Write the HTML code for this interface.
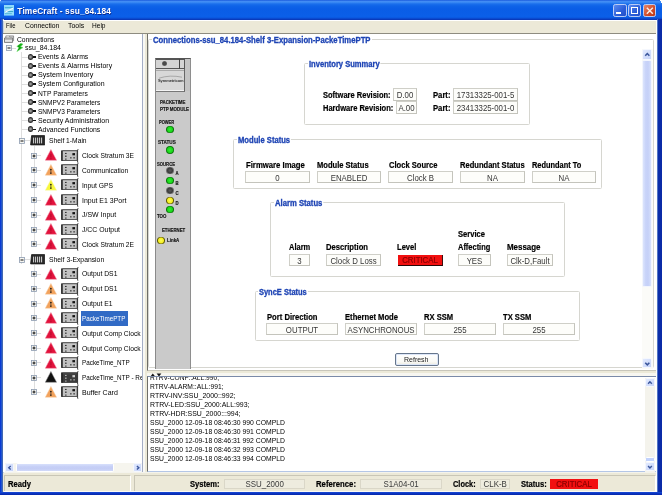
<!DOCTYPE html><html><head><meta charset="utf-8"><title>TimeCraft</title><style>
*{margin:0;padding:0;box-sizing:border-box}
html,body{width:662px;height:495px;overflow:hidden;background:#0A3FD8}
body{position:relative;font-family:"Liberation Sans",sans-serif;color:#000}
.a{position:absolute}
.t{position:absolute;white-space:nowrap;font-size:7.15px;line-height:9px;transform:scale(.95,1.09);transform-origin:0 6px;color:#000}
.b{position:absolute;white-space:nowrap;font-size:7.65px;line-height:10px;font-weight:bold;color:#000;-webkit-text-stroke:.18px #000;transform:scale(1,1.08);transform-origin:0 7px}
.g{position:absolute;border:1px solid #D6D6D0;border-radius:1.5px}
.gt{position:absolute;white-space:nowrap;font-size:7.65px;line-height:10px;font-weight:bold;color:#1E44B4;-webkit-text-stroke:.28px #1E44B4;background:#fff;padding:0 1px;transform:scale(1,1.08);transform-origin:0 7px}
.f{position:absolute;border:1px solid #C4C4BC;border-top-color:#CFCFC8;border-left-color:#CFCFC8;background:#FDFDFA;overflow:hidden}
.ft{position:absolute;left:0;right:0;text-align:center;font-size:7.7px;line-height:10px;white-space:nowrap;color:#363636;transform:scale(1.02,1.1);transform-origin:50% 7px}
.sf{position:absolute;border:1px solid #DAD7C8;background:#EEECDF}
</style></head><body><div id="w" style="position:absolute;left:0;top:0;width:662px;height:495px;will-change:transform">
<div class="a" style="left:0;top:0;width:662px;height:19.7px;background:linear-gradient(180deg,#1C5CDC 0,#2E74EA 4%,#4A96F8 9%,#3484F2 13%,#1A6EEC 20%,#0E63E8 30%,#0A5DE6 45%,#0B5FE8 84%,#0A55DC 90%,#0A40C4 95%,#0A34B2 100%)"></div>
<div class="a" style="left:3.2px;top:19.7px;width:653.8px;height:.9px;background:#fff;z-index:1"></div>
<div class="a" style="left:0;top:0;width:3px;height:2px;background:radial-gradient(circle at 100% 100%,transparent 2.5px,#fff 3px)"></div>
<div class="a" style="left:658px;top:0;width:4px;height:3px;background:radial-gradient(circle at 0 100%,transparent 3px,#fff 3.5px)"></div>
<div class="a" style="left:0;top:19px;width:4px;height:476px;background:linear-gradient(90deg,#0A3AD4 0,#0A3AD4 1px,#2256CE 1px,#2256CE 2px,#4268B2 2px,#4268B2 3px,#C4D2E4 3px,#C4D2E4 4px)"></div>
<div class="a" style="left:657px;top:19px;width:5px;height:476px;background:linear-gradient(90deg,#5274C4 0,#5274C4 1px,#0C2EAA 1px,#0A2AA6 100%)"></div>
<div class="a" style="left:0;top:491.5px;width:662px;height:3.5px;background:linear-gradient(180deg,#1A4CD8,#0A34C0 50%,#0626A8);z-index:3"></div>
<div class="a" style="left:4px;top:19.7px;width:653px;height:472.3px;background:#ECE9D8"></div>
<svg class="a" style="left:3.9px;top:5.2px" width="10" height="10.6" viewBox="0 0 10 10.6"><rect width="10" height="10.6" fill="#8FDBFB"/><rect x="0.8" y="2.2" width="8" height="1" fill="#3EA8CC"/><rect x="0.8" y="6" width="8.4" height="1" fill="#3EA8CC"/><rect x="0.8" y="8.2" width="7" height="0.9" fill="#55B8D8"/><path d="M1 7.2 L9 3.2" stroke="#fff" stroke-width="1.2"/><path d="M1 5 L9 5" stroke="#C8EEFC" stroke-width=".8"/></svg>
<div class="a" style="left:17.3px;top:5.6px;font-size:8.4px;line-height:11px;font-weight:bold;color:#fff;white-space:nowrap;letter-spacing:.12px;text-shadow:.6px .6px 0 #0A2A90">TimeCraft - ssu_84.184</div>
<div class="a" style="left:613px;top:3.9px;width:13.5px;height:13.6px;border:1px solid #BACCF6;border-radius:2.2px;background:linear-gradient(135deg,#5C8CF0,#2A5CD8 60%,#2450C8)"><div class="a" style="left:2.3px;top:7.6px;width:4.4px;height:1.6px;background:#fff"></div></div>
<div class="a" style="left:627.9px;top:3.9px;width:13.5px;height:13.6px;border:1px solid #BACCF6;border-radius:2.2px;background:linear-gradient(135deg,#5C8CF0,#2A5CD8 60%,#2450C8)"><div class="a" style="left:2.4px;top:2.2px;width:6.8px;height:6.8px;border:1px solid #fff;border-top-width:1.9px"></div></div>
<div class="a" style="left:642.8px;top:3.9px;width:13.5px;height:13.6px;border:1px solid #BACCF6;border-radius:2.2px;background:linear-gradient(135deg,#E88868,#D04A28 60%,#B83818)"><svg class="a" style="left:0;top:0" width="11" height="11" viewBox="0 0 11 11"><path d="M2.8 2.8 L8.8 8.8 M8.8 2.8 L2.8 8.8" stroke="#FBEDE6" stroke-width="1.45"/></svg></div>
<div class="t" style="left:6.0px;top:22px;transform:scale(0.825,1.09)">File</div>
<div class="t" style="left:25.0px;top:22px;transform:scale(0.9518,1.09)">Connection</div>
<div class="t" style="left:68.4px;top:22px;transform:scale(0.9717,1.09)">Tools</div>
<div class="t" style="left:91.8px;top:22px;transform:scale(0.9191,1.09)">Help</div>
<div class="a" style="left:3.2px;top:32.8px;width:653.8px;height:1px;background:#8E8C80"></div>
<div class="a" style="left:3.3px;top:33.5px;width:139.7px;height:438.5px;background:#fff;border-right:1px solid #A4AEC6"></div>
<div class="a" style="left:143px;top:33.5px;width:1.6px;height:438.5px;background:#F8F8F4"></div>
<div class="a" style="left:0;top:0;width:142.4px;height:463px;overflow:hidden">
<div class="a" style="left:21.1px;top:52px;width:.7px;height:212px;background:#DEDEDE"></div>
<div class="a" style="left:33.6px;top:146px;width:.7px;height:99px;background:#DEDEDE"></div>
<div class="a" style="left:33.6px;top:265px;width:.7px;height:128px;background:#DEDEDE"></div>
<svg class="a" style="left:4.2px;top:35px" width="10.4" height="8" viewBox="0 0 10.4 8"><path d="M1.8 3 L1.8 .9 L9.6 .9 L9.6 5.6 L8.6 5.6" fill="#F2F2F2" stroke="#5A5A5A" stroke-width=".6"/><path d="M5.6 .9 L5.6 2 L9.6 2" fill="none" stroke="#666" stroke-width=".5"/><path d="M.5 7.4 L.5 3.1 L8.6 3.1 L8.6 7.4 Z" fill="#E8E8E8" stroke="#4A4A4A" stroke-width=".7"/><path d="M.8 4.5 L8.4 4.5" stroke="#8A8A8A" stroke-width=".5"/></svg>
<div class="t" style="left:16.6px;top:36px;transform:scale(0.9445,1.09);">Connections</div>
<svg class="a" style="left:6.00px;top:44.70px" width="6" height="6" viewBox="0 0 6 6"><rect x=".45" y=".55" width="5.1" height="4.9" fill="#F6F6F2" stroke="#8C9BB0" stroke-width=".8"/><path d="M1.5 3 L4.5 3" stroke="#000" stroke-width=".95"/></svg>
<div class="a" style="left:11.8px;top:47.5px;width:4px;height:.7px;background:#DEDEDE"></div>
<svg class="a" style="left:15.6px;top:43.4px" width="7.8" height="9" viewBox="0 0 7.8 9"><path d="M5 .3 L.8 3.4 L3 4.5 L.9 8.6 L7 4.6 L4.6 3.7 L7 1.2 Z" fill="#18B418" stroke="#6EDC6E" stroke-width=".6" stroke-linejoin="round"/><path d="M4.6 1.2 L2 3.4 L4.2 4.3 L2.2 7.2" fill="none" stroke="#0E9A0E" stroke-width=".9"/></svg>
<div class="t" style="left:25.4px;top:44px;transform:scale(0.9746,1.09);">ssu_84.184</div>
<div class="a" style="left:21.5px;top:56.60px;width:6.5px;height:.7px;background:#DEDEDE"></div>
<div class="a" style="left:27.9px;top:54.15px;width:5.5px;height:5.5px;border-radius:50%;background:radial-gradient(circle,#A8A8A8 0,#888 25%,#2A2A2A 60%,#333 100%)"></div>
<div class="a" style="left:33.2px;top:56.30px;width:2.6px;height:1.3px;background:#111"></div>
<div class="t" style="left:38.0px;top:53px;transform:scale(0.9601,1.09);">Events &amp; Alarms</div>
<div class="a" style="left:21.5px;top:65.63px;width:6.5px;height:.7px;background:#DEDEDE"></div>
<div class="a" style="left:27.9px;top:63.18px;width:5.5px;height:5.5px;border-radius:50%;background:radial-gradient(circle,#A8A8A8 0,#888 25%,#2A2A2A 60%,#333 100%)"></div>
<div class="a" style="left:33.2px;top:65.33px;width:2.6px;height:1.3px;background:#111"></div>
<div class="t" style="left:38.0px;top:62px;transform:scale(0.9674,1.09);">Events &amp; Alarms History</div>
<div class="a" style="left:21.5px;top:74.66px;width:6.5px;height:.7px;background:#DEDEDE"></div>
<div class="a" style="left:27.9px;top:72.21px;width:5.5px;height:5.5px;border-radius:50%;background:radial-gradient(circle,#A8A8A8 0,#888 25%,#2A2A2A 60%,#333 100%)"></div>
<div class="a" style="left:33.2px;top:74.36px;width:2.6px;height:1.3px;background:#111"></div>
<div class="t" style="left:38.0px;top:71px;transform:scale(1.0023,1.09);">System Inventory</div>
<div class="a" style="left:21.5px;top:83.69px;width:6.5px;height:.7px;background:#DEDEDE"></div>
<div class="a" style="left:27.9px;top:81.24px;width:5.5px;height:5.5px;border-radius:50%;background:radial-gradient(circle,#A8A8A8 0,#888 25%,#2A2A2A 60%,#333 100%)"></div>
<div class="a" style="left:33.2px;top:83.39px;width:2.6px;height:1.3px;background:#111"></div>
<div class="t" style="left:38.0px;top:80px;transform:scale(0.9756,1.09);">System Configuration</div>
<div class="a" style="left:21.5px;top:92.72px;width:6.5px;height:.7px;background:#DEDEDE"></div>
<div class="a" style="left:27.9px;top:90.27px;width:5.5px;height:5.5px;border-radius:50%;background:radial-gradient(circle,#A8A8A8 0,#888 25%,#2A2A2A 60%,#333 100%)"></div>
<div class="a" style="left:33.2px;top:92.42px;width:2.6px;height:1.3px;background:#111"></div>
<div class="t" style="left:38.0px;top:90px;transform:scale(0.9388,1.09);">NTP Parameters</div>
<div class="a" style="left:21.5px;top:101.75px;width:6.5px;height:.7px;background:#DEDEDE"></div>
<div class="a" style="left:27.9px;top:99.30px;width:5.5px;height:5.5px;border-radius:50%;background:radial-gradient(circle,#A8A8A8 0,#888 25%,#2A2A2A 60%,#333 100%)"></div>
<div class="a" style="left:33.2px;top:101.45px;width:2.6px;height:1.3px;background:#111"></div>
<div class="t" style="left:38.0px;top:99px;transform:scale(0.9126,1.09);">SNMPV2 Parameters</div>
<div class="a" style="left:21.5px;top:110.78px;width:6.5px;height:.7px;background:#DEDEDE"></div>
<div class="a" style="left:27.9px;top:108.33px;width:5.5px;height:5.5px;border-radius:50%;background:radial-gradient(circle,#A8A8A8 0,#888 25%,#2A2A2A 60%,#333 100%)"></div>
<div class="a" style="left:33.2px;top:110.48px;width:2.6px;height:1.3px;background:#111"></div>
<div class="t" style="left:38.0px;top:108px;transform:scale(0.9126,1.09);">SNMPV3 Parameters</div>
<div class="a" style="left:21.5px;top:119.81px;width:6.5px;height:.7px;background:#DEDEDE"></div>
<div class="a" style="left:27.9px;top:117.36px;width:5.5px;height:5.5px;border-radius:50%;background:radial-gradient(circle,#A8A8A8 0,#888 25%,#2A2A2A 60%,#333 100%)"></div>
<div class="a" style="left:33.2px;top:119.51px;width:2.6px;height:1.3px;background:#111"></div>
<div class="t" style="left:38.0px;top:117px;transform:scale(0.9788,1.09);">Security Administration</div>
<div class="a" style="left:21.5px;top:128.84px;width:6.5px;height:.7px;background:#DEDEDE"></div>
<div class="a" style="left:27.9px;top:126.39px;width:5.5px;height:5.5px;border-radius:50%;background:radial-gradient(circle,#A8A8A8 0,#888 25%,#2A2A2A 60%,#333 100%)"></div>
<div class="a" style="left:33.2px;top:128.54px;width:2.6px;height:1.3px;background:#111"></div>
<div class="t" style="left:38.0px;top:126px;transform:scale(0.9629,1.09);">Advanced Functions</div>
<svg class="a" style="left:18.60px;top:137.60px" width="6" height="6" viewBox="0 0 6 6"><rect x=".45" y=".55" width="5.1" height="4.9" fill="#F6F6F2" stroke="#8C9BB0" stroke-width=".8"/><path d="M1.5 3 L4.5 3" stroke="#000" stroke-width=".95"/></svg>
<div class="a" style="left:24.5px;top:140.30px;width:5px;height:.7px;background:#DEDEDE"></div>
<svg class="a" style="left:29.8px;top:135.20px" width="15.4" height="10.6" viewBox="0 0 15.4 10.6"><path d="M1.6 .6 L14.6 .6 L14.8 9.9 L.6 9.9 Z" fill="#2A2A2A" stroke="#1A1A1A" stroke-width=".8" stroke-linejoin="round"/><g fill="#C8C8C8"><rect x="3" y="2.6" width="1.1" height="5.8"/><rect x="5" y="2.6" width="1.1" height="5.8"/><rect x="7" y="2.6" width="1.1" height="5.8"/><rect x="9" y="2.6" width="1.1" height="5.8"/><rect x="11" y="2.6" width="1.1" height="5.8"/></g></svg>
<div class="t" style="left:49.3px;top:137px;transform:scale(0.9378,1.09);">Shelf 1-Main</div>
<svg class="a" style="left:30.90px;top:152.60px" width="6" height="6" viewBox="0 0 6 6"><rect x=".45" y=".55" width="5.1" height="4.9" fill="#F6F6F2" stroke="#8C9BB0" stroke-width=".8"/><path d="M1.5 3 L4.5 3" stroke="#000" stroke-width=".95"/><path d="M3 1.5 L3 4.5" stroke="#000" stroke-width=".9"/></svg>
<div class="a" style="left:36.8px;top:155.30px;width:4px;height:.7px;background:#DEDEDE"></div>
<svg class="a" style="left:44.7px;top:149.40px" width="12" height="12" viewBox="0 0 12 12"><path d="M5.9 .5 L11.6 11.3 L.3 11.3 Z" fill="#E2123C" stroke="#F28AA0" stroke-width=".5"/><path d="M5.9 4.8 L5.9 8.4" stroke="#A80A26" stroke-width="1.1" opacity=".75"/><circle cx="5.9" cy="9.7" r=".7" fill="#A80A26" opacity=".7"/></svg>
<svg class="a" style="left:61px;top:148.60px" width="18" height="14" viewBox="0 0 18 14"><rect x=".7" y="1.9" width="15.4" height="9.6" fill="#C2C2C2" stroke="#3A3A3A" stroke-width=".8"/><rect x=".3" y="1.6" width="1.4" height="10.2" fill="#222"/><rect x="1.7" y="1.5" width="14.6" height=".9" fill="#333"/><rect x="1.9" y="2.5" width="13.8" height=".7" fill="#E6E6E6"/><g fill="#111"><rect x="4.2" y="3.9" width="1.3" height="1.1"/><rect x="4.2" y="6.6" width="1.3" height="1.2"/><rect x="4.2" y="9.6" width="1.3" height="1"/><rect x="11.4" y="4.1" width="2.6" height="2.2"/><rect x="9.2" y="8.3" width="1.3" height="1.1"/><rect x="12.4" y="8.3" width="1.4" height="1.1"/></g><path d="M17.5 .3 L16.6 .7 L16.6 13.3 L17.3 13.7" fill="none" stroke="#111" stroke-width=".75"/></svg>
<div class="t" style="left:81.7px;top:152px;transform:scale(0.9359,1.09);">Clock Stratum 3E</div>
<svg class="a" style="left:30.90px;top:167.40px" width="6" height="6" viewBox="0 0 6 6"><rect x=".45" y=".55" width="5.1" height="4.9" fill="#F6F6F2" stroke="#8C9BB0" stroke-width=".8"/><path d="M1.5 3 L4.5 3" stroke="#000" stroke-width=".95"/><path d="M3 1.5 L3 4.5" stroke="#000" stroke-width=".9"/></svg>
<div class="a" style="left:36.8px;top:170.10px;width:4px;height:.7px;background:#DEDEDE"></div>
<svg class="a" style="left:44.7px;top:164.20px" width="12" height="12" viewBox="0 0 12 12"><path d="M5.9 .5 L11.6 11.3 L.3 11.3 Z" fill="#F2A25C" stroke="#F8D0A8" stroke-width=".5"/><path d="M5.9 5.4 L5.9 9" stroke="#1A1A1A" stroke-width=".65"/><circle cx="5.9" cy="9.3" r=".75" fill="#111"/><circle cx="5.9" cy="5.6" r=".75" fill="#111"/></svg>
<svg class="a" style="left:61px;top:163.40px" width="18" height="14" viewBox="0 0 18 14"><rect x=".7" y="1.9" width="15.4" height="9.6" fill="#C2C2C2" stroke="#3A3A3A" stroke-width=".8"/><rect x=".3" y="1.6" width="1.4" height="10.2" fill="#222"/><rect x="1.7" y="1.5" width="14.6" height=".9" fill="#333"/><rect x="1.9" y="2.5" width="13.8" height=".7" fill="#E6E6E6"/><g fill="#111"><rect x="4.2" y="3.9" width="1.3" height="1.1"/><rect x="4.2" y="6.6" width="1.3" height="1.2"/><rect x="4.2" y="9.6" width="1.3" height="1"/><rect x="11.4" y="4.1" width="2.6" height="2.2"/><rect x="9.2" y="8.3" width="1.3" height="1.1"/><rect x="12.4" y="8.3" width="1.4" height="1.1"/></g><path d="M17.5 .3 L16.6 .7 L16.6 13.3 L17.3 13.7" fill="none" stroke="#111" stroke-width=".75"/></svg>
<div class="t" style="left:81.7px;top:167px;transform:scale(0.9313,1.09);">Communication</div>
<svg class="a" style="left:30.90px;top:182.20px" width="6" height="6" viewBox="0 0 6 6"><rect x=".45" y=".55" width="5.1" height="4.9" fill="#F6F6F2" stroke="#8C9BB0" stroke-width=".8"/><path d="M1.5 3 L4.5 3" stroke="#000" stroke-width=".95"/><path d="M3 1.5 L3 4.5" stroke="#000" stroke-width=".9"/></svg>
<div class="a" style="left:36.8px;top:184.90px;width:4px;height:.7px;background:#DEDEDE"></div>
<svg class="a" style="left:44.7px;top:179.00px" width="12" height="12" viewBox="0 0 12 12"><path d="M5.9 .5 L11.6 11.3 L.3 11.3 Z" fill="#F8F83C" stroke="#F8F8B0" stroke-width=".5"/><path d="M5.9 5.4 L5.9 9" stroke="#1A1A1A" stroke-width=".65"/><circle cx="5.9" cy="9.3" r=".75" fill="#111"/><circle cx="5.9" cy="5.6" r=".75" fill="#111"/></svg>
<svg class="a" style="left:61px;top:178.20px" width="18" height="14" viewBox="0 0 18 14"><rect x=".7" y="1.9" width="15.4" height="9.6" fill="#C2C2C2" stroke="#3A3A3A" stroke-width=".8"/><rect x=".3" y="1.6" width="1.4" height="10.2" fill="#222"/><rect x="1.7" y="1.5" width="14.6" height=".9" fill="#333"/><rect x="1.9" y="2.5" width="13.8" height=".7" fill="#E6E6E6"/><g fill="#111"><rect x="4.2" y="3.9" width="1.3" height="1.1"/><rect x="4.2" y="6.6" width="1.3" height="1.2"/><rect x="4.2" y="9.6" width="1.3" height="1"/><rect x="11.4" y="4.1" width="2.6" height="2.2"/><rect x="9.2" y="8.3" width="1.3" height="1.1"/><rect x="12.4" y="8.3" width="1.4" height="1.1"/></g><path d="M17.5 .3 L16.6 .7 L16.6 13.3 L17.3 13.7" fill="none" stroke="#111" stroke-width=".75"/></svg>
<div class="t" style="left:81.7px;top:182px;transform:scale(0.9438,1.09);">Input GPS</div>
<svg class="a" style="left:30.90px;top:197.00px" width="6" height="6" viewBox="0 0 6 6"><rect x=".45" y=".55" width="5.1" height="4.9" fill="#F6F6F2" stroke="#8C9BB0" stroke-width=".8"/><path d="M1.5 3 L4.5 3" stroke="#000" stroke-width=".95"/><path d="M3 1.5 L3 4.5" stroke="#000" stroke-width=".9"/></svg>
<div class="a" style="left:36.8px;top:199.70px;width:4px;height:.7px;background:#DEDEDE"></div>
<svg class="a" style="left:44.7px;top:193.80px" width="12" height="12" viewBox="0 0 12 12"><path d="M5.9 .5 L11.6 11.3 L.3 11.3 Z" fill="#E2123C" stroke="#F28AA0" stroke-width=".5"/><path d="M5.9 4.8 L5.9 8.4" stroke="#A80A26" stroke-width="1.1" opacity=".75"/><circle cx="5.9" cy="9.7" r=".7" fill="#A80A26" opacity=".7"/></svg>
<svg class="a" style="left:61px;top:193.00px" width="18" height="14" viewBox="0 0 18 14"><rect x=".7" y="1.9" width="15.4" height="9.6" fill="#C2C2C2" stroke="#3A3A3A" stroke-width=".8"/><rect x=".3" y="1.6" width="1.4" height="10.2" fill="#222"/><rect x="1.7" y="1.5" width="14.6" height=".9" fill="#333"/><rect x="1.9" y="2.5" width="13.8" height=".7" fill="#E6E6E6"/><g fill="#111"><rect x="4.2" y="3.9" width="1.3" height="1.1"/><rect x="4.2" y="6.6" width="1.3" height="1.2"/><rect x="4.2" y="9.6" width="1.3" height="1"/><rect x="11.4" y="4.1" width="2.6" height="2.2"/><rect x="9.2" y="8.3" width="1.3" height="1.1"/><rect x="12.4" y="8.3" width="1.4" height="1.1"/></g><path d="M17.5 .3 L16.6 .7 L16.6 13.3 L17.3 13.7" fill="none" stroke="#111" stroke-width=".75"/></svg>
<div class="t" style="left:81.7px;top:197px;transform:scale(0.9725,1.09);">Input E1 3Port</div>
<svg class="a" style="left:30.90px;top:211.80px" width="6" height="6" viewBox="0 0 6 6"><rect x=".45" y=".55" width="5.1" height="4.9" fill="#F6F6F2" stroke="#8C9BB0" stroke-width=".8"/><path d="M1.5 3 L4.5 3" stroke="#000" stroke-width=".95"/><path d="M3 1.5 L3 4.5" stroke="#000" stroke-width=".9"/></svg>
<div class="a" style="left:36.8px;top:214.50px;width:4px;height:.7px;background:#DEDEDE"></div>
<svg class="a" style="left:44.7px;top:208.60px" width="12" height="12" viewBox="0 0 12 12"><path d="M5.9 .5 L11.6 11.3 L.3 11.3 Z" fill="#E2123C" stroke="#F28AA0" stroke-width=".5"/><path d="M5.9 4.8 L5.9 8.4" stroke="#A80A26" stroke-width="1.1" opacity=".75"/><circle cx="5.9" cy="9.7" r=".7" fill="#A80A26" opacity=".7"/></svg>
<svg class="a" style="left:61px;top:207.80px" width="18" height="14" viewBox="0 0 18 14"><rect x=".7" y="1.9" width="15.4" height="9.6" fill="#C2C2C2" stroke="#3A3A3A" stroke-width=".8"/><rect x=".3" y="1.6" width="1.4" height="10.2" fill="#222"/><rect x="1.7" y="1.5" width="14.6" height=".9" fill="#333"/><rect x="1.9" y="2.5" width="13.8" height=".7" fill="#E6E6E6"/><g fill="#111"><rect x="4.2" y="3.9" width="1.3" height="1.1"/><rect x="4.2" y="6.6" width="1.3" height="1.2"/><rect x="4.2" y="9.6" width="1.3" height="1"/><rect x="11.4" y="4.1" width="2.6" height="2.2"/><rect x="9.2" y="8.3" width="1.3" height="1.1"/><rect x="12.4" y="8.3" width="1.4" height="1.1"/></g><path d="M17.5 .3 L16.6 .7 L16.6 13.3 L17.3 13.7" fill="none" stroke="#111" stroke-width=".75"/></svg>
<div class="t" style="left:81.7px;top:211px;transform:scale(0.976,1.09);">J/SW Input</div>
<svg class="a" style="left:30.90px;top:226.60px" width="6" height="6" viewBox="0 0 6 6"><rect x=".45" y=".55" width="5.1" height="4.9" fill="#F6F6F2" stroke="#8C9BB0" stroke-width=".8"/><path d="M1.5 3 L4.5 3" stroke="#000" stroke-width=".95"/><path d="M3 1.5 L3 4.5" stroke="#000" stroke-width=".9"/></svg>
<div class="a" style="left:36.8px;top:229.30px;width:4px;height:.7px;background:#DEDEDE"></div>
<svg class="a" style="left:44.7px;top:223.40px" width="12" height="12" viewBox="0 0 12 12"><path d="M5.9 .5 L11.6 11.3 L.3 11.3 Z" fill="#E2123C" stroke="#F28AA0" stroke-width=".5"/><path d="M5.9 4.8 L5.9 8.4" stroke="#A80A26" stroke-width="1.1" opacity=".75"/><circle cx="5.9" cy="9.7" r=".7" fill="#A80A26" opacity=".7"/></svg>
<svg class="a" style="left:61px;top:222.60px" width="18" height="14" viewBox="0 0 18 14"><rect x=".7" y="1.9" width="15.4" height="9.6" fill="#C2C2C2" stroke="#3A3A3A" stroke-width=".8"/><rect x=".3" y="1.6" width="1.4" height="10.2" fill="#222"/><rect x="1.7" y="1.5" width="14.6" height=".9" fill="#333"/><rect x="1.9" y="2.5" width="13.8" height=".7" fill="#E6E6E6"/><g fill="#111"><rect x="4.2" y="3.9" width="1.3" height="1.1"/><rect x="4.2" y="6.6" width="1.3" height="1.2"/><rect x="4.2" y="9.6" width="1.3" height="1"/><rect x="11.4" y="4.1" width="2.6" height="2.2"/><rect x="9.2" y="8.3" width="1.3" height="1.1"/><rect x="12.4" y="8.3" width="1.4" height="1.1"/></g><path d="M17.5 .3 L16.6 .7 L16.6 13.3 L17.3 13.7" fill="none" stroke="#111" stroke-width=".75"/></svg>
<div class="t" style="left:81.7px;top:226px;transform:scale(0.9645,1.09);">J/CC Output</div>
<svg class="a" style="left:30.90px;top:241.40px" width="6" height="6" viewBox="0 0 6 6"><rect x=".45" y=".55" width="5.1" height="4.9" fill="#F6F6F2" stroke="#8C9BB0" stroke-width=".8"/><path d="M1.5 3 L4.5 3" stroke="#000" stroke-width=".95"/><path d="M3 1.5 L3 4.5" stroke="#000" stroke-width=".9"/></svg>
<div class="a" style="left:36.8px;top:244.10px;width:4px;height:.7px;background:#DEDEDE"></div>
<svg class="a" style="left:44.7px;top:238.20px" width="12" height="12" viewBox="0 0 12 12"><path d="M5.9 .5 L11.6 11.3 L.3 11.3 Z" fill="#E2123C" stroke="#F28AA0" stroke-width=".5"/><path d="M5.9 4.8 L5.9 8.4" stroke="#A80A26" stroke-width="1.1" opacity=".75"/><circle cx="5.9" cy="9.7" r=".7" fill="#A80A26" opacity=".7"/></svg>
<svg class="a" style="left:61px;top:237.40px" width="18" height="14" viewBox="0 0 18 14"><rect x=".7" y="1.9" width="15.4" height="9.6" fill="#C2C2C2" stroke="#3A3A3A" stroke-width=".8"/><rect x=".3" y="1.6" width="1.4" height="10.2" fill="#222"/><rect x="1.7" y="1.5" width="14.6" height=".9" fill="#333"/><rect x="1.9" y="2.5" width="13.8" height=".7" fill="#E6E6E6"/><g fill="#111"><rect x="4.2" y="3.9" width="1.3" height="1.1"/><rect x="4.2" y="6.6" width="1.3" height="1.2"/><rect x="4.2" y="9.6" width="1.3" height="1"/><rect x="11.4" y="4.1" width="2.6" height="2.2"/><rect x="9.2" y="8.3" width="1.3" height="1.1"/><rect x="12.4" y="8.3" width="1.4" height="1.1"/></g><path d="M17.5 .3 L16.6 .7 L16.6 13.3 L17.3 13.7" fill="none" stroke="#111" stroke-width=".75"/></svg>
<div class="t" style="left:81.7px;top:241px;transform:scale(0.9359,1.09);">Clock Stratum 2E</div>
<svg class="a" style="left:18.60px;top:256.60px" width="6" height="6" viewBox="0 0 6 6"><rect x=".45" y=".55" width="5.1" height="4.9" fill="#F6F6F2" stroke="#8C9BB0" stroke-width=".8"/><path d="M1.5 3 L4.5 3" stroke="#000" stroke-width=".95"/></svg>
<div class="a" style="left:24.5px;top:259.30px;width:5px;height:.7px;background:#DEDEDE"></div>
<svg class="a" style="left:29.8px;top:254.20px" width="15.4" height="10.6" viewBox="0 0 15.4 10.6"><path d="M1.6 .6 L14.6 .6 L14.8 9.9 L.6 9.9 Z" fill="#2A2A2A" stroke="#1A1A1A" stroke-width=".8" stroke-linejoin="round"/><g fill="#C8C8C8"><rect x="3" y="2.6" width="1.1" height="5.8"/><rect x="5" y="2.6" width="1.1" height="5.8"/><rect x="7" y="2.6" width="1.1" height="5.8"/><rect x="9" y="2.6" width="1.1" height="5.8"/><rect x="11" y="2.6" width="1.1" height="5.8"/></g></svg>
<div class="t" style="left:49.3px;top:256px;transform:scale(0.9522,1.09);">Shelf 3-Expansion</div>
<svg class="a" style="left:30.90px;top:270.90px" width="6" height="6" viewBox="0 0 6 6"><rect x=".45" y=".55" width="5.1" height="4.9" fill="#F6F6F2" stroke="#8C9BB0" stroke-width=".8"/><path d="M1.5 3 L4.5 3" stroke="#000" stroke-width=".95"/><path d="M3 1.5 L3 4.5" stroke="#000" stroke-width=".9"/></svg>
<div class="a" style="left:36.8px;top:273.60px;width:4px;height:.7px;background:#DEDEDE"></div>
<svg class="a" style="left:44.7px;top:267.70px" width="12" height="12" viewBox="0 0 12 12"><path d="M5.9 .5 L11.6 11.3 L.3 11.3 Z" fill="#E2123C" stroke="#F28AA0" stroke-width=".5"/><path d="M5.9 4.8 L5.9 8.4" stroke="#A80A26" stroke-width="1.1" opacity=".75"/><circle cx="5.9" cy="9.7" r=".7" fill="#A80A26" opacity=".7"/></svg>
<svg class="a" style="left:61px;top:266.90px" width="18" height="14" viewBox="0 0 18 14"><rect x=".7" y="1.9" width="15.4" height="9.6" fill="#C2C2C2" stroke="#3A3A3A" stroke-width=".8"/><rect x=".3" y="1.6" width="1.4" height="10.2" fill="#222"/><rect x="1.7" y="1.5" width="14.6" height=".9" fill="#333"/><rect x="1.9" y="2.5" width="13.8" height=".7" fill="#E6E6E6"/><g fill="#111"><rect x="4.2" y="3.9" width="1.3" height="1.1"/><rect x="4.2" y="6.6" width="1.3" height="1.2"/><rect x="4.2" y="9.6" width="1.3" height="1"/><rect x="11.4" y="4.1" width="2.6" height="2.2"/><rect x="9.2" y="8.3" width="1.3" height="1.1"/><rect x="12.4" y="8.3" width="1.4" height="1.1"/></g><path d="M17.5 .3 L16.6 .7 L16.6 13.3 L17.3 13.7" fill="none" stroke="#111" stroke-width=".75"/></svg>
<div class="t" style="left:81.7px;top:270px;transform:scale(0.9487,1.09);">Output DS1</div>
<svg class="a" style="left:30.90px;top:285.70px" width="6" height="6" viewBox="0 0 6 6"><rect x=".45" y=".55" width="5.1" height="4.9" fill="#F6F6F2" stroke="#8C9BB0" stroke-width=".8"/><path d="M1.5 3 L4.5 3" stroke="#000" stroke-width=".95"/><path d="M3 1.5 L3 4.5" stroke="#000" stroke-width=".9"/></svg>
<div class="a" style="left:36.8px;top:288.40px;width:4px;height:.7px;background:#DEDEDE"></div>
<svg class="a" style="left:44.7px;top:282.50px" width="12" height="12" viewBox="0 0 12 12"><path d="M5.9 .5 L11.6 11.3 L.3 11.3 Z" fill="#F2A25C" stroke="#F8D0A8" stroke-width=".5"/><path d="M5.9 5.4 L5.9 9" stroke="#1A1A1A" stroke-width=".65"/><circle cx="5.9" cy="9.3" r=".75" fill="#111"/><circle cx="5.9" cy="5.6" r=".75" fill="#111"/></svg>
<svg class="a" style="left:61px;top:281.70px" width="18" height="14" viewBox="0 0 18 14"><rect x=".7" y="1.9" width="15.4" height="9.6" fill="#C2C2C2" stroke="#3A3A3A" stroke-width=".8"/><rect x=".3" y="1.6" width="1.4" height="10.2" fill="#222"/><rect x="1.7" y="1.5" width="14.6" height=".9" fill="#333"/><rect x="1.9" y="2.5" width="13.8" height=".7" fill="#E6E6E6"/><g fill="#111"><rect x="4.2" y="3.9" width="1.3" height="1.1"/><rect x="4.2" y="6.6" width="1.3" height="1.2"/><rect x="4.2" y="9.6" width="1.3" height="1"/><rect x="11.4" y="4.1" width="2.6" height="2.2"/><rect x="9.2" y="8.3" width="1.3" height="1.1"/><rect x="12.4" y="8.3" width="1.4" height="1.1"/></g><path d="M17.5 .3 L16.6 .7 L16.6 13.3 L17.3 13.7" fill="none" stroke="#111" stroke-width=".75"/></svg>
<div class="t" style="left:81.7px;top:285px;transform:scale(0.9487,1.09);">Output DS1</div>
<svg class="a" style="left:30.90px;top:300.50px" width="6" height="6" viewBox="0 0 6 6"><rect x=".45" y=".55" width="5.1" height="4.9" fill="#F6F6F2" stroke="#8C9BB0" stroke-width=".8"/><path d="M1.5 3 L4.5 3" stroke="#000" stroke-width=".95"/><path d="M3 1.5 L3 4.5" stroke="#000" stroke-width=".9"/></svg>
<div class="a" style="left:36.8px;top:303.20px;width:4px;height:.7px;background:#DEDEDE"></div>
<svg class="a" style="left:44.7px;top:297.30px" width="12" height="12" viewBox="0 0 12 12"><path d="M5.9 .5 L11.6 11.3 L.3 11.3 Z" fill="#F2A25C" stroke="#F8D0A8" stroke-width=".5"/><path d="M5.9 5.4 L5.9 9" stroke="#1A1A1A" stroke-width=".65"/><circle cx="5.9" cy="9.3" r=".75" fill="#111"/><circle cx="5.9" cy="5.6" r=".75" fill="#111"/></svg>
<svg class="a" style="left:61px;top:296.50px" width="18" height="14" viewBox="0 0 18 14"><rect x=".7" y="1.9" width="15.4" height="9.6" fill="#C2C2C2" stroke="#3A3A3A" stroke-width=".8"/><rect x=".3" y="1.6" width="1.4" height="10.2" fill="#222"/><rect x="1.7" y="1.5" width="14.6" height=".9" fill="#333"/><rect x="1.9" y="2.5" width="13.8" height=".7" fill="#E6E6E6"/><g fill="#111"><rect x="4.2" y="3.9" width="1.3" height="1.1"/><rect x="4.2" y="6.6" width="1.3" height="1.2"/><rect x="4.2" y="9.6" width="1.3" height="1"/><rect x="11.4" y="4.1" width="2.6" height="2.2"/><rect x="9.2" y="8.3" width="1.3" height="1.1"/><rect x="12.4" y="8.3" width="1.4" height="1.1"/></g><path d="M17.5 .3 L16.6 .7 L16.6 13.3 L17.3 13.7" fill="none" stroke="#111" stroke-width=".75"/></svg>
<div class="t" style="left:81.7px;top:300px;transform:scale(0.9516,1.09);">Output E1</div>
<svg class="a" style="left:30.90px;top:315.30px" width="6" height="6" viewBox="0 0 6 6"><rect x=".45" y=".55" width="5.1" height="4.9" fill="#F6F6F2" stroke="#8C9BB0" stroke-width=".8"/><path d="M1.5 3 L4.5 3" stroke="#000" stroke-width=".95"/><path d="M3 1.5 L3 4.5" stroke="#000" stroke-width=".9"/></svg>
<div class="a" style="left:36.8px;top:318.00px;width:4px;height:.7px;background:#DEDEDE"></div>
<svg class="a" style="left:44.7px;top:312.10px" width="12" height="12" viewBox="0 0 12 12"><path d="M5.9 .5 L11.6 11.3 L.3 11.3 Z" fill="#E2123C" stroke="#F28AA0" stroke-width=".5"/><path d="M5.9 4.8 L5.9 8.4" stroke="#A80A26" stroke-width="1.1" opacity=".75"/><circle cx="5.9" cy="9.7" r=".7" fill="#A80A26" opacity=".7"/></svg>
<svg class="a" style="left:61px;top:311.30px" width="18" height="14" viewBox="0 0 18 14"><rect x=".7" y="1.9" width="15.4" height="9.6" fill="#C2C2C2" stroke="#3A3A3A" stroke-width=".8"/><rect x=".3" y="1.6" width="1.4" height="10.2" fill="#222"/><rect x="1.7" y="1.5" width="14.6" height=".9" fill="#333"/><rect x="1.9" y="2.5" width="13.8" height=".7" fill="#E6E6E6"/><g fill="#111"><rect x="4.2" y="3.9" width="1.3" height="1.1"/><rect x="4.2" y="6.6" width="1.3" height="1.2"/><rect x="4.2" y="9.6" width="1.3" height="1"/><rect x="11.4" y="4.1" width="2.6" height="2.2"/><rect x="9.2" y="8.3" width="1.3" height="1.1"/><rect x="12.4" y="8.3" width="1.4" height="1.1"/></g><path d="M17.5 .3 L16.6 .7 L16.6 13.3 L17.3 13.7" fill="none" stroke="#111" stroke-width=".75"/></svg>
<div class="a" style="left:80.7px;top:311.30px;width:47.2px;height:14.4px;background:#316AC5"></div>
<div class="t" style="left:82.0px;top:315px;transform:scale(0.8795,1.09);color:#fff">PackeTimePTP</div>
<svg class="a" style="left:30.90px;top:330.10px" width="6" height="6" viewBox="0 0 6 6"><rect x=".45" y=".55" width="5.1" height="4.9" fill="#F6F6F2" stroke="#8C9BB0" stroke-width=".8"/><path d="M1.5 3 L4.5 3" stroke="#000" stroke-width=".95"/><path d="M3 1.5 L3 4.5" stroke="#000" stroke-width=".9"/></svg>
<div class="a" style="left:36.8px;top:332.80px;width:4px;height:.7px;background:#DEDEDE"></div>
<svg class="a" style="left:44.7px;top:326.90px" width="12" height="12" viewBox="0 0 12 12"><path d="M5.9 .5 L11.6 11.3 L.3 11.3 Z" fill="#E2123C" stroke="#F28AA0" stroke-width=".5"/><path d="M5.9 4.8 L5.9 8.4" stroke="#A80A26" stroke-width="1.1" opacity=".75"/><circle cx="5.9" cy="9.7" r=".7" fill="#A80A26" opacity=".7"/></svg>
<svg class="a" style="left:61px;top:326.10px" width="18" height="14" viewBox="0 0 18 14"><rect x=".7" y="1.9" width="15.4" height="9.6" fill="#C2C2C2" stroke="#3A3A3A" stroke-width=".8"/><rect x=".3" y="1.6" width="1.4" height="10.2" fill="#222"/><rect x="1.7" y="1.5" width="14.6" height=".9" fill="#333"/><rect x="1.9" y="2.5" width="13.8" height=".7" fill="#E6E6E6"/><g fill="#111"><rect x="4.2" y="3.9" width="1.3" height="1.1"/><rect x="4.2" y="6.6" width="1.3" height="1.2"/><rect x="4.2" y="9.6" width="1.3" height="1"/><rect x="11.4" y="4.1" width="2.6" height="2.2"/><rect x="9.2" y="8.3" width="1.3" height="1.1"/><rect x="12.4" y="8.3" width="1.4" height="1.1"/></g><path d="M17.5 .3 L16.6 .7 L16.6 13.3 L17.3 13.7" fill="none" stroke="#111" stroke-width=".75"/></svg>
<div class="t" style="left:81.7px;top:330px;transform:scale(0.942,1.09);">Output Comp Clock</div>
<svg class="a" style="left:30.90px;top:344.90px" width="6" height="6" viewBox="0 0 6 6"><rect x=".45" y=".55" width="5.1" height="4.9" fill="#F6F6F2" stroke="#8C9BB0" stroke-width=".8"/><path d="M1.5 3 L4.5 3" stroke="#000" stroke-width=".95"/><path d="M3 1.5 L3 4.5" stroke="#000" stroke-width=".9"/></svg>
<div class="a" style="left:36.8px;top:347.60px;width:4px;height:.7px;background:#DEDEDE"></div>
<svg class="a" style="left:44.7px;top:341.70px" width="12" height="12" viewBox="0 0 12 12"><path d="M5.9 .5 L11.6 11.3 L.3 11.3 Z" fill="#E2123C" stroke="#F28AA0" stroke-width=".5"/><path d="M5.9 4.8 L5.9 8.4" stroke="#A80A26" stroke-width="1.1" opacity=".75"/><circle cx="5.9" cy="9.7" r=".7" fill="#A80A26" opacity=".7"/></svg>
<svg class="a" style="left:61px;top:340.90px" width="18" height="14" viewBox="0 0 18 14"><rect x=".7" y="1.9" width="15.4" height="9.6" fill="#C2C2C2" stroke="#3A3A3A" stroke-width=".8"/><rect x=".3" y="1.6" width="1.4" height="10.2" fill="#222"/><rect x="1.7" y="1.5" width="14.6" height=".9" fill="#333"/><rect x="1.9" y="2.5" width="13.8" height=".7" fill="#E6E6E6"/><g fill="#111"><rect x="4.2" y="3.9" width="1.3" height="1.1"/><rect x="4.2" y="6.6" width="1.3" height="1.2"/><rect x="4.2" y="9.6" width="1.3" height="1"/><rect x="11.4" y="4.1" width="2.6" height="2.2"/><rect x="9.2" y="8.3" width="1.3" height="1.1"/><rect x="12.4" y="8.3" width="1.4" height="1.1"/></g><path d="M17.5 .3 L16.6 .7 L16.6 13.3 L17.3 13.7" fill="none" stroke="#111" stroke-width=".75"/></svg>
<div class="t" style="left:81.7px;top:345px;transform:scale(0.942,1.09);">Output Comp Clock</div>
<svg class="a" style="left:30.90px;top:359.70px" width="6" height="6" viewBox="0 0 6 6"><rect x=".45" y=".55" width="5.1" height="4.9" fill="#F6F6F2" stroke="#8C9BB0" stroke-width=".8"/><path d="M1.5 3 L4.5 3" stroke="#000" stroke-width=".95"/><path d="M3 1.5 L3 4.5" stroke="#000" stroke-width=".9"/></svg>
<div class="a" style="left:36.8px;top:362.40px;width:4px;height:.7px;background:#DEDEDE"></div>
<svg class="a" style="left:44.7px;top:356.50px" width="12" height="12" viewBox="0 0 12 12"><path d="M5.9 .5 L11.6 11.3 L.3 11.3 Z" fill="#E2123C" stroke="#F28AA0" stroke-width=".5"/><path d="M5.9 4.8 L5.9 8.4" stroke="#A80A26" stroke-width="1.1" opacity=".75"/><circle cx="5.9" cy="9.7" r=".7" fill="#A80A26" opacity=".7"/></svg>
<svg class="a" style="left:61px;top:355.70px" width="18" height="14" viewBox="0 0 18 14"><rect x=".7" y="1.9" width="15.4" height="9.6" fill="#C2C2C2" stroke="#3A3A3A" stroke-width=".8"/><rect x=".3" y="1.6" width="1.4" height="10.2" fill="#222"/><rect x="1.7" y="1.5" width="14.6" height=".9" fill="#333"/><rect x="1.9" y="2.5" width="13.8" height=".7" fill="#E6E6E6"/><g fill="#111"><rect x="4.2" y="3.9" width="1.3" height="1.1"/><rect x="4.2" y="6.6" width="1.3" height="1.2"/><rect x="4.2" y="9.6" width="1.3" height="1"/><rect x="11.4" y="4.1" width="2.6" height="2.2"/><rect x="9.2" y="8.3" width="1.3" height="1.1"/><rect x="12.4" y="8.3" width="1.4" height="1.1"/></g><path d="M17.5 .3 L16.6 .7 L16.6 13.3 L17.3 13.7" fill="none" stroke="#111" stroke-width=".75"/></svg>
<div class="t" style="left:81.7px;top:359px;transform:scale(0.8864,1.09);">PackeTime_NTP</div>
<svg class="a" style="left:30.90px;top:374.50px" width="6" height="6" viewBox="0 0 6 6"><rect x=".45" y=".55" width="5.1" height="4.9" fill="#F6F6F2" stroke="#8C9BB0" stroke-width=".8"/><path d="M1.5 3 L4.5 3" stroke="#000" stroke-width=".95"/><path d="M3 1.5 L3 4.5" stroke="#000" stroke-width=".9"/></svg>
<div class="a" style="left:36.8px;top:377.20px;width:4px;height:.7px;background:#DEDEDE"></div>
<svg class="a" style="left:44.7px;top:371.30px" width="12" height="12" viewBox="0 0 12 12"><path d="M5.9 .5 L11.6 11.3 L.3 11.3 Z" fill="#111" stroke="#888" stroke-width=".5"/></svg>
<svg class="a" style="left:61px;top:370.50px" width="18" height="14" viewBox="0 0 18 14"><rect x=".7" y="1.9" width="15.4" height="9.6" fill="#3C3C3C" stroke="#3A3A3A" stroke-width=".8"/><rect x=".3" y="1.6" width="1.4" height="10.2" fill="#222"/><rect x="1.7" y="1.5" width="14.6" height=".9" fill="#333"/><rect x="1.9" y="2.5" width="13.8" height=".7" fill="#555"/><g fill="#D0D0D0"><rect x="4.2" y="3.9" width="1.3" height="1.1"/><rect x="4.2" y="6.6" width="1.3" height="1.2"/><rect x="4.2" y="9.6" width="1.3" height="1"/><rect x="11.4" y="4.1" width="2.6" height="2.2"/><rect x="9.2" y="8.3" width="1.3" height="1.1"/><rect x="12.4" y="8.3" width="1.4" height="1.1"/></g><path d="M17.5 .3 L16.6 .7 L16.6 13.3 L17.3 13.7" fill="none" stroke="#111" stroke-width=".75"/></svg>
<div class="t" style="left:81.7px;top:374px;transform:scale(0.8907,1.09);">PackeTime_NTP - Re</div>
<svg class="a" style="left:30.90px;top:389.30px" width="6" height="6" viewBox="0 0 6 6"><rect x=".45" y=".55" width="5.1" height="4.9" fill="#F6F6F2" stroke="#8C9BB0" stroke-width=".8"/><path d="M1.5 3 L4.5 3" stroke="#000" stroke-width=".95"/><path d="M3 1.5 L3 4.5" stroke="#000" stroke-width=".9"/></svg>
<div class="a" style="left:36.8px;top:392.00px;width:4px;height:.7px;background:#DEDEDE"></div>
<svg class="a" style="left:44.7px;top:386.10px" width="12" height="12" viewBox="0 0 12 12"><path d="M5.9 .5 L11.6 11.3 L.3 11.3 Z" fill="#F2A25C" stroke="#F8D0A8" stroke-width=".5"/><path d="M5.9 5.4 L5.9 9" stroke="#1A1A1A" stroke-width=".65"/><circle cx="5.9" cy="9.3" r=".75" fill="#111"/><circle cx="5.9" cy="5.6" r=".75" fill="#111"/></svg>
<svg class="a" style="left:61px;top:385.30px" width="18" height="14" viewBox="0 0 18 14"><rect x=".7" y="1.9" width="15.4" height="9.6" fill="#C2C2C2" stroke="#3A3A3A" stroke-width=".8"/><rect x=".3" y="1.6" width="1.4" height="10.2" fill="#222"/><rect x="1.7" y="1.5" width="14.6" height=".9" fill="#333"/><rect x="1.9" y="2.5" width="13.8" height=".7" fill="#E6E6E6"/><g fill="#111"><rect x="4.2" y="3.9" width="1.3" height="1.1"/><rect x="4.2" y="6.6" width="1.3" height="1.2"/><rect x="4.2" y="9.6" width="1.3" height="1"/><rect x="11.4" y="4.1" width="2.6" height="2.2"/><rect x="9.2" y="8.3" width="1.3" height="1.1"/><rect x="12.4" y="8.3" width="1.4" height="1.1"/></g><path d="M17.5 .3 L16.6 .7 L16.6 13.3 L17.3 13.7" fill="none" stroke="#111" stroke-width=".75"/></svg>
<div class="t" style="left:81.7px;top:389px;transform:scale(0.9838,1.09);">Buffer Card</div>
</div>
<div class="a" style="left:4.5px;top:462.8px;width:137.5px;height:9.2px;background:#F6F5EE"></div>
<div class="a" style="left:4.8px;top:463px;width:9px;height:9px;border:.7px solid #F4F7FE;border-radius:1.5px;background:linear-gradient(135deg,#E2EAFE,#C6D3F9)"><svg class="a" style="left:0;top:0" width="7.6" height="7.6" viewBox="0 0 10 10"><path d="M2.6 6.2 L5 3.6 L7.4 6.2" fill="none" stroke="#3A569C" stroke-width="1.8" transform="rotate(270 5 5)"/></svg></div>
<div class="a" style="left:15.5px;top:463.2px;width:98px;height:8.6px;border:.7px solid #fff;border-radius:1.5px;background:linear-gradient(180deg,#D8E0FC,#C6CFF6 40%,#C4CDF5 70%,#D2DAFA)"></div>
<div class="a" style="left:132.6px;top:463px;width:9px;height:9px;border:.7px solid #F4F7FE;border-radius:1.5px;background:linear-gradient(135deg,#E2EAFE,#C6D3F9)"><svg class="a" style="left:0;top:0" width="7.6" height="7.6" viewBox="0 0 10 10"><path d="M2.6 6.2 L5 3.6 L7.4 6.2" fill="none" stroke="#3A569C" stroke-width="1.8" transform="rotate(90 5 5)"/></svg></div>
<div class="a" style="left:147px;top:33.5px;width:510px;height:337px;background:#fff;border-left:1px solid #6E6E68;border-bottom:1px solid #C8C6BA"></div>
<div class="g" style="left:148px;top:39px;width:506px;height:329px"></div>
<div class="gt" style="left:152px;top:36px;transform:scale(1.0089,1.08)">Connections-ssu_84.184-Shelf 3-Expansion-PackeTimePTP</div>
<div class="a" style="left:155.1px;top:58.4px;width:35.8px;height:310.4px;background:#CACACA;border-left:.8px solid #8A8A8A;border-right:.9px solid #8E8E8E;border-top:1.1px solid #555"></div>
<div class="a" style="left:185.2px;top:59.4px;width:5px;height:32px;background:#C4C4C4"></div>
<div class="a" style="left:155.6px;top:59px;width:29.4px;height:10.2px;background:#D4D4D4;border:1px solid #555;border-left:none"></div>
<div class="a" style="left:179px;top:59px;width:1.3px;height:10.2px;background:#444"></div>
<div class="a" style="left:162.1px;top:61.2px;width:5px;height:5px;border-radius:50%;background:radial-gradient(circle,#4A4A4A 40%,#6A6A6A 70%,#999 100%)"></div>
<div class="a" style="left:155.9px;top:69.2px;width:29.2px;height:22.8px;background:#D8D8D8;border-right:1px solid #666;border-bottom:1px solid #777"></div>
<div class="a" style="left:156px;top:70.4px;width:28px;height:.8px;background:#AAA"></div>
<div class="a" style="left:156px;top:89.6px;width:28px;height:.9px;background:#F4F4F4"></div>
<svg class="a" style="left:158px;top:75px" width="25" height="4" viewBox="0 0 25 4"><path d="M1 3.2 Q12 -.4 24 2.2" fill="none" stroke="#777" stroke-width=".5"/></svg>
<div class="a" style="left:157.6px;top:77.8px;font-size:4.1px;line-height:5px;color:#333;white-space:nowrap;transform:scale(.98,1.05);transform-origin:0 0;font-weight:bold;letter-spacing:-.1px">Symmetricom</div>
<div class="a" style="left:160px;top:99.8px;font-size:4.15px;line-height:5px;font-weight:bold;color:#111;-webkit-text-stroke:.15px #222;white-space:nowrap;transform:scale(1.0549,1.12);transform-origin:0 2.7px">PACKETIME</div>
<div class="a" style="left:159.5px;top:106.5px;font-size:4.2px;line-height:5px;font-weight:bold;color:#111;-webkit-text-stroke:.15px #222;white-space:nowrap;transform:scale(1.0624,1.12);transform-origin:0 2.7px">PTP MODULE</div>
<div class="a" style="left:159.1px;top:120.2px;font-size:4.1px;line-height:5px;font-weight:bold;color:#111;-webkit-text-stroke:.15px #222;white-space:nowrap;transform:scale(0.9826,1.12);transform-origin:0 2.7px">POWER</div>
<div class="a" style="left:157.9px;top:139.9px;font-size:4.4px;line-height:5px;font-weight:bold;color:#111;-webkit-text-stroke:.15px #222;white-space:nowrap;transform:scale(1.0519,1.12);transform-origin:0 2.7px">STATUS</div>
<div class="a" style="left:156.9px;top:161.5px;font-size:4.3px;line-height:5px;font-weight:bold;color:#111;-webkit-text-stroke:.15px #222;white-space:nowrap;transform:scale(0.9788,1.12);transform-origin:0 2.7px">SOURCE</div>
<div class="a" style="left:157.3px;top:214.0px;font-size:4.2px;line-height:5px;font-weight:bold;color:#111;-webkit-text-stroke:.15px #222;white-space:nowrap;transform:scale(1.0444,1.12);transform-origin:0 2.7px">TOO</div>
<div class="a" style="left:161.8px;top:228.2px;font-size:4.2px;line-height:5px;font-weight:bold;color:#111;-webkit-text-stroke:.15px #222;white-space:nowrap;transform:scale(1.0275,1.12);transform-origin:0 2.7px">ETHERNET</div>
<div class="a" style="left:175.6px;top:171.2px;font-size:4.3px;line-height:5px;font-weight:bold;color:#111;-webkit-text-stroke:.15px #222;white-space:nowrap;transform:scale(1,1.12);transform-origin:0 2.7px">A</div>
<div class="a" style="left:175.4px;top:181.2px;font-size:4.3px;line-height:5px;font-weight:bold;color:#111;-webkit-text-stroke:.15px #222;white-space:nowrap;transform:scale(1,1.12);transform-origin:0 2.7px">B</div>
<div class="a" style="left:175.4px;top:191.2px;font-size:4.3px;line-height:5px;font-weight:bold;color:#111;-webkit-text-stroke:.15px #222;white-space:nowrap;transform:scale(1,1.12);transform-origin:0 2.7px">C</div>
<div class="a" style="left:175.4px;top:200.7px;font-size:4.3px;line-height:5px;font-weight:bold;color:#111;-webkit-text-stroke:.15px #222;white-space:nowrap;transform:scale(1,1.12);transform-origin:0 2.7px">D</div>
<div class="a" style="left:166.7px;top:237.7px;font-size:4.3px;line-height:5px;font-weight:bold;color:#111;-webkit-text-stroke:.15px #222;white-space:nowrap;transform:scale(1.0304,1.12);transform-origin:0 2.7px">LinkA</div>
<div class="a" style="left:166.1px;top:125.7px;width:7.8px;height:7.8px;border-radius:50%;background:radial-gradient(circle,#30F030 0,#18D418 48%,#0A6E0A 66%,#0A6E0A 82%,rgba(110,110,110,.55) 100%)"></div>
<div class="a" style="left:166.1px;top:146.0px;width:7.8px;height:7.8px;border-radius:50%;background:radial-gradient(circle,#30F030 0,#18D418 48%,#0A6E0A 66%,#0A6E0A 82%,rgba(110,110,110,.55) 100%)"></div>
<div class="a" style="left:166.1px;top:166.6px;width:7.8px;height:7.8px;border-radius:50%;background:radial-gradient(circle,#5A5A5A 0,#3C3C3C 48%,#6E6E6E 66%,#6E6E6E 82%,rgba(110,110,110,.55) 100%)"></div>
<div class="a" style="left:166.1px;top:176.5px;width:7.8px;height:7.8px;border-radius:50%;background:radial-gradient(circle,#30F030 0,#18D418 48%,#0A6E0A 66%,#0A6E0A 82%,rgba(110,110,110,.55) 100%)"></div>
<div class="a" style="left:166.1px;top:186.6px;width:7.8px;height:7.8px;border-radius:50%;background:radial-gradient(circle,#5A5A5A 0,#3C3C3C 48%,#6E6E6E 66%,#6E6E6E 82%,rgba(110,110,110,.55) 100%)"></div>
<div class="a" style="left:166.1px;top:196.5px;width:7.8px;height:7.8px;border-radius:50%;background:radial-gradient(circle,#FFFF58 0,#F4EC20 48%,#5A5600 66%,#5A5600 82%,rgba(110,110,110,.55) 100%)"></div>
<div class="a" style="left:166.1px;top:205.6px;width:7.8px;height:7.8px;border-radius:50%;background:radial-gradient(circle,#30F030 0,#18D418 48%,#0A6E0A 66%,#0A6E0A 82%,rgba(110,110,110,.55) 100%)"></div>
<div class="a" style="left:157.0px;top:236.5px;width:7.8px;height:7.8px;border-radius:50%;background:radial-gradient(circle,#FFFF58 0,#F4EC20 48%,#5A5600 66%,#5A5600 82%,rgba(110,110,110,.55) 100%)"></div>
<div class="g" style="left:304px;top:63px;width:226px;height:62px"></div>
<div class="gt" style="left:307.6px;top:60px;transform:scale(0.991,1.08)">Inventory Summary</div>
<div class="b" style="left:323.1px;top:91px;transform:scale(0.9828,1.08);">Software Revision:</div>
<div class="b" style="left:323.1px;top:104px;transform:scale(0.9854,1.08);">Hardware Revision:</div>
<div class="f" style="left:393px;top:88px;width:24px;height:13px"><div class="ft" style="top:2px">D.00</div></div>
<div class="f" style="left:396px;top:101px;width:21px;height:13px"><div class="ft" style="top:2px">A.00</div></div>
<div class="b" style="left:433.2px;top:91px;transform:scale(1.0045,1.08);">Part:</div>
<div class="b" style="left:433.2px;top:104px;transform:scale(1.0045,1.08);">Part:</div>
<div class="f" style="left:453px;top:88px;width:65px;height:13px"><div class="ft" style="top:2px">17313325-001-5</div></div>
<div class="f" style="left:453px;top:101px;width:65px;height:13px"><div class="ft" style="top:2px">23413325-001-0</div></div>
<div class="g" style="left:233px;top:139px;width:369px;height:50px"></div>
<div class="gt" style="left:236.6px;top:136px;transform:scale(0.9977,1.08)">Module Status</div>
<div class="b" style="left:245.5px;top:161px;transform:scale(1.0122,1.08);">Firmware Image</div>
<div class="f" style="left:245px;top:171px;width:65px;height:12px"><div class="ft" style="top:2px">0</div></div>
<div class="b" style="left:317.15000000000003px;top:161px;transform:scale(0.9882,1.08);">Module Status</div>
<div class="f" style="left:317px;top:171px;width:64px;height:12px"><div class="ft" style="top:2px">ENABLED</div></div>
<div class="b" style="left:388.8px;top:161px;transform:scale(0.9909,1.08);">Clock Source</div>
<div class="f" style="left:388px;top:171px;width:65px;height:12px"><div class="ft" style="top:2px">Clock B</div></div>
<div class="b" style="left:460.45px;top:161px;transform:scale(0.9897,1.08);">Redundant Status</div>
<div class="f" style="left:460px;top:171px;width:65px;height:12px"><div class="ft" style="top:2px">NA</div></div>
<div class="b" style="left:532.0999999999999px;top:161px;transform:scale(0.9686,1.08);">Redundant To</div>
<div class="f" style="left:532px;top:171px;width:64px;height:12px"><div class="ft" style="top:2px">NA</div></div>
<div class="g" style="left:270px;top:202px;width:295px;height:75px"></div>
<div class="gt" style="left:273.6px;top:199px;transform:scale(1.0055,1.08)">Alarm Status</div>
<div class="b" style="left:288.8px;top:243px;transform:scale(0.9782,1.08);">Alarm</div>
<div class="f" style="left:289px;top:254px;width:21px;height:12px"><div class="ft" style="top:2px">3</div></div>
<div class="b" style="left:326.4px;top:243px;transform:scale(0.9993,1.08);">Description</div>
<div class="f" style="left:326px;top:254px;width:55px;height:12px"><div class="ft" style="top:2px">Clock D Loss</div></div>
<div class="b" style="left:396.7px;top:243px;transform:scale(0.9925,1.08);">Level</div>
<div class="a" style="left:398px;top:255px;width:45px;height:11px;background:#F21010;border-right:1px solid #3A1010;border-bottom:1px solid #2A0808;overflow:hidden"><div class="ft" style="top:1px;color:#8A0000;-webkit-text-stroke:.2px #8A0000">CRITICAL</div></div>
<div class="b" style="left:458.4px;top:230px;transform:scale(0.9962,1.08);">Service</div>
<div class="b" style="left:458.4px;top:243px;transform:scale(0.9756,1.08);">Affecting</div>
<div class="f" style="left:458px;top:254px;width:33px;height:12px"><div class="ft" style="top:2px">YES</div></div>
<div class="b" style="left:506.9px;top:243px;transform:scale(1.0378,1.08);">Message</div>
<div class="f" style="left:507px;top:254px;width:46px;height:12px"><div class="ft" style="top:2px">Clk-D,Fault</div></div>
<div class="g" style="left:255px;top:291px;width:325px;height:50px"></div>
<div class="gt" style="left:258px;top:288px;transform:scale(0.9786,1.08)">SyncE Status</div>
<div class="b" style="left:266.8px;top:313px;transform:scale(0.9994,1.08);">Port Direction</div>
<div class="f" style="left:266px;top:323px;width:72px;height:12px"><div class="ft" style="top:2px">OUTPUT</div></div>
<div class="b" style="left:345.3px;top:313px;transform:scale(0.9985,1.08);">Ethernet Mode</div>
<div class="f" style="left:345px;top:323px;width:72px;height:12px"><div class="ft" style="top:2px">ASYNCHRONOUS</div></div>
<div class="b" style="left:424.3px;top:313px;transform:scale(0.9933,1.08);">RX SSM</div>
<div class="f" style="left:424px;top:323px;width:72px;height:12px"><div class="ft" style="top:2px">255</div></div>
<div class="b" style="left:503.1px;top:313px;transform:scale(0.9946,1.08);">TX SSM</div>
<div class="f" style="left:503px;top:323px;width:72px;height:12px"><div class="ft" style="top:2px">255</div></div>
<div class="a" style="left:395px;top:353px;width:44px;height:13.4px;border:1px solid #66768C;border-radius:2px;background:linear-gradient(180deg,#fff,#FAFAF6 70%,#ECEAE0);box-shadow:inset 0 0 0 1px #DCE6F8"></div>
<div class="t" style="left:404.4px;top:356px;color:#222;transform:scale(0.9794,1.09)">Refresh</div>
<div class="a" style="left:641.5px;top:48.5px;width:11.5px;height:320px;background:#FBFBF8"></div>
<div class="a" style="left:642.2px;top:49px;width:10px;height:11px;border:.7px solid #F4F7FE;border-radius:1.5px;background:linear-gradient(135deg,#E2EAFE,#C6D3F9)"><svg class="a" style="left:0;top:0" width="8.6" height="9.6" viewBox="0 0 10 10"><path d="M2.6 6.2 L5 3.6 L7.4 6.2" fill="none" stroke="#3A569C" stroke-width="1.8" transform="rotate(0 5 5)"/></svg></div>
<div class="a" style="left:642.4px;top:60.2px;width:9.6px;height:227.2px;border:.7px solid #F2F5FE;border-radius:1.5px;background:linear-gradient(90deg,#DCE5FD,#C8D3F9 35%,#C6D1F8 65%,#D6E0FC)"></div>
<div class="a" style="left:642.2px;top:357.6px;width:10px;height:10.8px;border:.7px solid #F4F7FE;border-radius:1.5px;background:linear-gradient(135deg,#E2EAFE,#C6D3F9)"><svg class="a" style="left:0;top:0" width="8.6" height="9.4" viewBox="0 0 10 10"><path d="M2.6 6.2 L5 3.6 L7.4 6.2" fill="none" stroke="#3A569C" stroke-width="1.8" transform="rotate(180 5 5)"/></svg></div>
<div class="a" style="left:147px;top:373px;width:510px;height:3px;background:#F7F6F0"></div>
<svg class="a" style="left:150.4px;top:372.6px" width="12" height="4" viewBox="0 0 12 4"><path d="M.4 3.6 L2.8 .4 L5.2 3.6 Z M6.6 .4 L11.4 .4 L9 3.6 Z" fill="#111"/></svg>
<div class="a" style="left:147px;top:376px;width:510px;height:96px;background:#fff;border-left:1px solid #6E6E68;border-top:1px solid #7A8AA8;border-bottom:1px solid #B4C6E6"></div>
<div class="a" style="left:148px;top:377px;width:496px;height:94px;overflow:hidden">
<div class="t" style="left:1.7px;top:-3px;transform:scale(0.933,1.09)">RTRV-CONF::ALL:990;</div>
<div class="t" style="left:1.7px;top:6px;transform:scale(0.9384,1.09)">RTRV-ALARM::ALL:991;</div>
<div class="t" style="left:1.7px;top:15px;transform:scale(0.9805,1.09)">RTRV-INV:SSU_2000::992;</div>
<div class="t" style="left:1.7px;top:24px;transform:scale(0.974,1.09)">RTRV-LED:SSU_2000:ALL:993;</div>
<div class="t" style="left:1.7px;top:33px;transform:scale(0.973,1.09)">RTRV-HDR:SSU_2000:::994;</div>
<div class="t" style="left:1.7px;top:42px;transform:scale(0.9552,1.09)">SSU_2000 12-09-18 08:46:30 990 COMPLD</div>
<div class="t" style="left:1.7px;top:51px;transform:scale(0.9552,1.09)">SSU_2000 12-09-18 08:46:30 991 COMPLD</div>
<div class="t" style="left:1.7px;top:60px;transform:scale(0.9552,1.09)">SSU_2000 12-09-18 08:46:31 992 COMPLD</div>
<div class="t" style="left:1.7px;top:69px;transform:scale(0.9552,1.09)">SSU_2000 12-09-18 08:46:32 993 COMPLD</div>
<div class="t" style="left:1.7px;top:78px;transform:scale(0.9552,1.09)">SSU_2000 12-09-18 08:46:33 994 COMPLD</div>
</div>
<div class="a" style="left:645.3px;top:377.5px;width:9.6px;height:94px;background:#F4F3EC"></div>
<div class="a" style="left:645.4px;top:377.8px;width:9.3px;height:9.2px;border:.7px solid #F4F7FE;border-radius:1.5px;background:linear-gradient(135deg,#E2EAFE,#C6D3F9)"><svg class="a" style="left:0;top:0" width="7.9" height="7.799999999999999" viewBox="0 0 10 10"><path d="M2.6 6.2 L5 3.6 L7.4 6.2" fill="none" stroke="#3A569C" stroke-width="1.8" transform="rotate(0 5 5)"/></svg></div>
<div class="a" style="left:645.4px;top:456.6px;width:9.3px;height:5.4px;border:.7px solid #fff;border-radius:1.5px;background:#C2D2FC"></div>
<div class="a" style="left:645.4px;top:462.2px;width:9.3px;height:9.2px;border:.7px solid #F4F7FE;border-radius:1.5px;background:linear-gradient(135deg,#E2EAFE,#C6D3F9)"><svg class="a" style="left:0;top:0" width="7.9" height="7.799999999999999" viewBox="0 0 10 10"><path d="M2.6 6.2 L5 3.6 L7.4 6.2" fill="none" stroke="#3A569C" stroke-width="1.8" transform="rotate(180 5 5)"/></svg></div>
<div class="a" style="left:4px;top:472.4px;width:653px;height:2.2px;background:#F4F3EC"></div>
<div class="a" style="left:3.2px;top:473px;width:653.8px;height:19px;background:#ECE9D8"></div>
<div class="a" style="left:4px;top:474.6px;width:127px;height:17.2px;border:1px solid #C9C6B6;border-right-color:#fff;border-bottom-color:#fff"></div>
<div class="a" style="left:133.6px;top:474.6px;width:522px;height:17.2px;border:1px solid #C9C6B6;border-right-color:#fff;border-bottom-color:#fff"></div>
<div class="b" style="left:7.6px;top:480px;transform:scale(0.9984,1.08);">Ready</div>
<div class="b" style="left:189.9px;top:480px;transform:scale(0.9955,1.08);">System:</div>
<div class="sf" style="left:223.7px;top:479px;width:81.3px;height:10px"><div class="ft" style="top:0px;color:#3A3A3A;transform:scale(1.03,1.1)">SSU_2000</div></div>
<div class="b" style="left:316px;top:480px;transform:scale(1.0127,1.08);">Reference:</div>
<div class="sf" style="left:360px;top:479px;width:82.3px;height:10px"><div class="ft" style="top:0px;color:#3A3A3A;transform:scale(1.03,1.1)">S1A04-01</div></div>
<div class="b" style="left:452.6px;top:480px;transform:scale(0.9675,1.08);">Clock:</div>
<div class="sf" style="left:479.5px;top:479px;width:30.5px;height:10px"><div class="ft" style="top:0px;color:#3A3A3A;transform:scale(1.03,1.1)">CLK-B</div></div>
<div class="b" style="left:520.7px;top:480px;transform:scale(0.992,1.08);">Status:</div>
<div class="a" style="left:550px;top:479px;width:48px;height:10px;background:#F21010;overflow:hidden"><div class="ft" style="top:1px;color:#8A0000;-webkit-text-stroke:.2px #8A0000">CRITICAL</div></div>
<div class="a" style="left:656px;top:20px;width:1px;height:471.5px;background:#FDFDFB;z-index:2"></div>
<div class="a" style="left:4px;top:490.5px;width:653px;height:1px;background:#FBFAF4;z-index:2"></div>
</div></body></html>
